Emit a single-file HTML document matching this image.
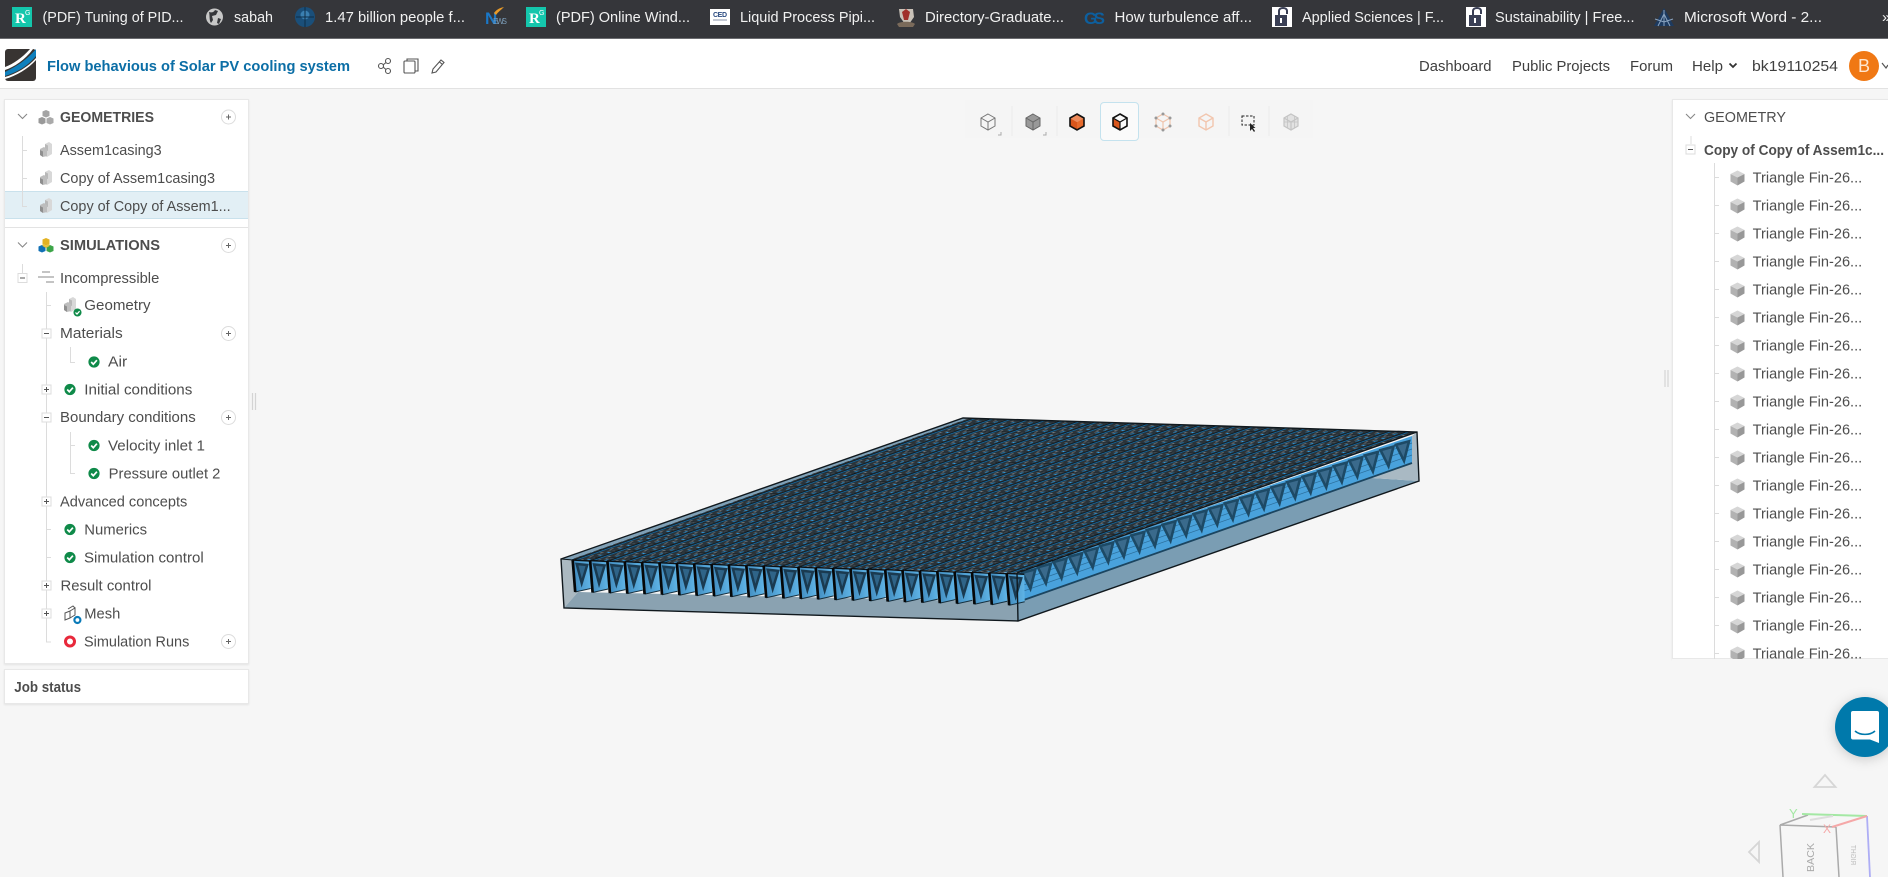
<!DOCTYPE html>
<html lang="en">
<head>
<meta charset="utf-8">
<title>Flow behavious of Solar PV cooling system</title>
<style>
html,body{margin:0;padding:0;width:1888px;height:877px;overflow:hidden;background:#f6f6f6;font-family:"Liberation Sans",sans-serif}
.abs{position:absolute}
#bar{left:0;top:0;width:1888px;height:38px;background:#35363a;border-bottom:1px solid #6b6c70}
#hdr{left:0;top:39px;width:1888px;height:50px;background:#fff;border-bottom:1px solid #e2e2e2;box-sizing:border-box}
.panel{background:#fff;border:1px solid #e8e8e8;box-shadow:0 1px 2px rgba(0,0,0,.08);box-sizing:border-box}
svg{position:absolute;left:0;top:0}
.b text{font-size:15px;fill:#f1f1f1}
.t text{font-size:14.5px;fill:#4d4d4d}
.n text{font-size:14.5px;fill:#3f3f3f}
.bd{font-weight:700}
.l{stroke:#dcdcdc;stroke-width:1;fill:none}
</style>
</head>
<body>
<div id="bar" class="abs"></div>
<div id="hdr" class="abs"></div>
<div class="abs" style="left:965px;top:100px;width:348px;height:38px;background:#f5f5f5"></div>
<div class="abs" style="left:1100px;top:102px;width:39px;height:39px;background:#fafafa;border:1px solid #c4e2ee;border-radius:4px;box-sizing:border-box"></div>
<div class="abs panel" style="left:4px;top:99px;width:245px;height:565px"></div>
<div class="abs" style="left:5px;top:191px;width:243px;height:28px;background:#e2eff5;border-top:1px solid #c9e1ec;border-bottom:1px solid #c9e1ec;box-sizing:border-box"></div>
<div class="abs" style="left:5px;top:227px;width:243px;height:1px;background:#e3e3e3"></div>
<div class="abs panel" style="left:4px;top:669px;width:245px;height:35px"></div>
<div class="abs panel" style="left:1672px;top:99px;width:230px;height:560px"></div>

<svg width="1888" height="877" viewBox="0 0 1888 877" xmlns="http://www.w3.org/2000/svg">
<defs>
<pattern id="top" width="100" height="200" patternUnits="userSpaceOnUse" patternTransform="matrix(.1736 .0053 .0995 -.03525 572.7 560)">
<rect width="100" height="200" fill="#2a3339"/>
<rect x="0" y="0" width="10" height="200" fill="#0e1315"/>
<rect x="10" y="0" width="16" height="200" fill="#165f8f"/>
<rect x="36" y="0" width="12" height="36" fill="#6f777d"/>
<rect x="36" y="100" width="12" height="30" fill="#7c8489"/>
<rect x="52" y="46" width="12" height="36" fill="#5b646a"/>
<rect x="52" y="150" width="12" height="36" fill="#687177"/>
<rect x="72" y="10" width="14" height="30" fill="#2f9fe6"/>
<rect x="72" y="64" width="14" height="30" fill="#465159"/>
<rect x="72" y="120" width="14" height="40" fill="#1f79b3"/>
<rect x="26" y="88" width="74" height="7" fill="#14191c"/>
</pattern>
<linearGradient id="finf" x1="0" x2="1" y1="0" y2="0"><stop offset="0" stop-color="#3f88bb"/><stop offset="1" stop-color="#5fb4e6"/></linearGradient>
<g id="fin">
<polygon points="0,0 17.5,1 18,28.5 2.5,32" fill="url(#finf)"/>
<polygon points="4,4 14.5,5 9,23" fill="#2f6488" stroke="#1a3a50" stroke-width="2.5"/>
<line x1="0" y1="0" x2="17.5" y2="1" stroke="#0b1115" stroke-width="1.4"/>
<line x1="2.5" y1="32" x2="18" y2="28.5" stroke="#16303f" stroke-width="1"/>
<line x1="0" y1="0" x2="2.5" y2="32" stroke="#050708" stroke-width="2.7"/>
</g>
<g id="tri"><polygon points="0,1 13,-2.5 8,17" fill="#3a6a8c" stroke="#1d4a66" stroke-width="2.6"/></g>
<g id="ck"><circle r="5.6" fill="#0f8a49"/><path d="M-2.8 0 -.7 2.2 2.9 -1.8" fill="none" stroke="#fff" stroke-width="1.7"/></g>
<g id="pl"><circle r="7" fill="#fff" stroke="#dcdcdc"/><path d="M-2.5 0H2.5M0 -2.5V2.5" stroke="#666" stroke-width="1"/></g>
<g id="mn"><rect x="-4.5" y="-4.5" width="9" height="9" fill="#fff" stroke="#dcdcdc"/><path d="M-2.5 0H2.5" stroke="#555" stroke-width="1"/></g>
<g id="ps"><rect x="-4.5" y="-4.5" width="9" height="9" fill="#fff" stroke="#dcdcdc"/><path d="M-2.5 0H2.5M0 -2.5V2.5" stroke="#555" stroke-width="1"/></g>
<g id="geo"><polygon points="-1,-6 3,-8 6,-6 6,4 1,7 -1,6" fill="#d8d8d8"/><polygon points="-1,-6 2,-4.5 2,1 -1,0" fill="#b8b8b8"/><polygon points="-6,-1 -2,-3 1,-1 1,6 -3,7 -6,5" fill="#bdbdbd"/><polygon points="-6,0 -3,1.5 -3,7 -6,5" fill="#8f8f8f"/></g>
<g id="geos"><polygon points="0,-7 3.5,-5.5 3.5,-1 0,.5 -3.5,-1 -3.5,-5.5" fill="#a4a4a4"/><polygon points="-4,0 -.5,1.5 -.5,6 -4,7.5 -7.5,6 -7.5,1.5" fill="#999"/><polygon points="4,0 7.5,1.5 7.5,6 4,7.5 .5,6 .5,1.5" fill="#aaa"/></g>
<g id="cb"><polygon points="0,-7 7,-3.5 0,0 -7,-3.5" fill="#d6d6d6"/><polygon points="-7,-3.5 0,0 0,8 -7,4" fill="#b2b2b2"/><polygon points="7,-3.5 0,0 0,8 7,4" fill="#989898"/></g>
<g id="hex"><polygon points="0,-8 7,-4 7,4 0,8 -7,4 -7,-4"/><path d="M-7 -4 0 0 7 -4M0 0V8"/></g>
</defs>

<!-- bookmarks -->
<g class="b">
<rect x="12" y="7" width="20" height="20" fill="#14c6ac"/><text x="15" y="23" style="font-size:15px;fill:#fff;font-family:'Liberation Serif',serif;font-weight:700">R</text><text x="25" y="15" style="font-size:7px;fill:#fff">G</text>
<text x="42.5" y="22" textLength="141" lengthAdjust="spacingAndGlyphs">(PDF) Tuning of PID...</text>
<circle cx="214.5" cy="17" r="8.5" fill="#c7c7c7"/><path d="M209 12c3 1 5 0 6-2l3 1-2 4-4 1 1 4-2 3c-2-3-1-7-2-11zm9 6 3 1-2 5-2-1z" fill="#35363a"/>
<text x="234" y="22" textLength="39" lengthAdjust="spacingAndGlyphs">sabah</text>
<circle cx="305" cy="17" r="10" fill="#1a4f7a"/><circle cx="305" cy="15" r="4.5" fill="#3a7fb0"/><path d="M305 7V27M296 17H314" stroke="#0e2d47" stroke-width="1"/>
<text x="325" y="22" textLength="140" lengthAdjust="spacingAndGlyphs">1.47 billion people f...</text>
<text x="485" y="24" style="font-size:17px;font-weight:700;fill:#1a78c8" textLength="8">N</text><path d="M494 13c3-4 6-5 10-6-3 3-6 5-8 8z" fill="#e89a28"/><text x="493" y="24" style="font-size:8px;fill:#7a9ab5" textLength="14">EWS</text>
<rect x="526" y="7" width="20" height="20" fill="#14c6ac"/><text x="529" y="23" style="font-size:15px;fill:#fff;font-family:'Liberation Serif',serif;font-weight:700">R</text><text x="539" y="15" style="font-size:7px;fill:#fff">G</text>
<text x="556" y="22" textLength="134" lengthAdjust="spacingAndGlyphs">(PDF) Online Wind...</text>
<rect x="710" y="9" width="20" height="16" fill="#fff"/><text x="713" y="17" style="font-size:7px;fill:#2a4a80;font-weight:700" textLength="14">CED</text><path d="M713 20H727" stroke="#8a93a8"/>
<text x="740" y="22" textLength="135" lengthAdjust="spacingAndGlyphs">Liquid Process Pipi...</text>
<path d="M899 9h14l1 8-7 10-7-10z" fill="#c9c2b8"/><path d="M902 12 906 9 910 12 908 20H904z" fill="#a02f2a"/><path d="M897 24c3-3 15-3 18 0l-2 3H899z" fill="#7a6a5a"/>
<text x="925" y="22" textLength="139" lengthAdjust="spacingAndGlyphs">Directory-Graduate...</text>
<text x="1084" y="24" style="font-size:17px;font-weight:700;fill:#0d5f9e" textLength="21">GS</text>
<text x="1114.5" y="22" textLength="137.5" lengthAdjust="spacingAndGlyphs">How turbulence aff...</text>
<rect x="1272" y="7" width="20" height="20" fill="#fff"/><rect x="1275" y="15" width="12" height="11" fill="#3a3f55"/><path d="M1279 15V11c0-4 8-4 8 0v3" fill="none" stroke="#3a3f55" stroke-width="2"/><rect x="1280" y="18" width="2" height="5" fill="#fff"/>
<text x="1302" y="22" textLength="142" lengthAdjust="spacingAndGlyphs">Applied Sciences | F...</text>
<rect x="1466" y="7" width="20" height="20" fill="#fff"/><rect x="1469" y="15" width="12" height="11" fill="#3a3f55"/><path d="M1473 15V11c0-4 8-4 8 0v3" fill="none" stroke="#3a3f55" stroke-width="2"/><rect x="1474" y="18" width="2" height="5" fill="#fff"/>
<text x="1495" y="22" textLength="139.5" lengthAdjust="spacingAndGlyphs">Sustainability | Free...</text>
<path d="M1664 8 1674 26H1654z" fill="#1d3a5f"/><path d="M1664 10V26M1658 26 1664 14 1670 26M1655 19 1664 22 1673 19" stroke="#8aa4c0" fill="none"/>
<text x="1684" y="22" textLength="138" lengthAdjust="spacingAndGlyphs">Microsoft Word - 2...</text>
<text x="1882" y="22" style="font-size:15px">»</text>
</g>

<!-- header -->
<rect x="5" y="49" width="31" height="32" rx="3" fill="#383432"/>
<path d="M5 72C13 68 25 62 36 49V56C27 67 15 73 5 76Z" fill="#0f80bd"/>
<path d="M5 67C13 64 22 58 30 49H33C25 60 14 67 5 70Z" fill="#fff"/>
<path d="M5 77C16 74 28 67 36 58V60C28 69 16 76 5 79Z" fill="#fff"/>
<text x="47" y="71" textLength="303" lengthAdjust="spacingAndGlyphs" style="font-size:15px;font-weight:700;fill:#0b6ea6">Flow behavious of Solar PV cooling system</text>
<g fill="none" stroke="#555" stroke-width="1.1">
<circle cx="381" cy="66" r="2.5"/><circle cx="388" cy="61" r="2.5"/><circle cx="388" cy="71" r="2.5"/><path d="M383 65 386 62.5M383 67 386 69.5"/>
<rect x="404" y="61" width="11" height="12" rx="1"/><path d="M407 61V59h11v12h-3"/>
<path d="M432 73 433 69 441 60 444 62.5 436 72Z M439.5 62 442.5 64.5"/>
</g>
<g class="n">
<text x="1419" y="71" textLength="72.5" lengthAdjust="spacingAndGlyphs">Dashboard</text>
<text x="1512" y="71" textLength="98" lengthAdjust="spacingAndGlyphs">Public Projects</text>
<text x="1630" y="71" textLength="43" lengthAdjust="spacingAndGlyphs">Forum</text>
<text x="1692" y="71" textLength="31" lengthAdjust="spacingAndGlyphs">Help</text>
<text x="1752" y="71" textLength="86" lengthAdjust="spacingAndGlyphs">bk19110254</text>
</g>
<path d="M1729.5 63.5 1733 67 1736.5 63.5" fill="none" stroke="#333" stroke-width="1.8"/>
<circle cx="1864" cy="66" r="15" fill="#f07814"/>
<text x="1858" y="72" style="font-size:18px;fill:#ffe6cf">B</text>
<path d="M1882 63 1886 68 1888 65" fill="none" stroke="#555" stroke-width="1.2"/>

<!-- toolbar -->
<g stroke="#ececec"><path d="M1012 106V136M1057 106V136M1229 106V136M1269 106V136"/></g>
<g transform="translate(988 122)"><use href="#hex" fill="none" stroke="#777" stroke-width="1"/></g>
<path d="M1001 132V135H998" fill="none" stroke="#aaa"/>
<g transform="translate(1033 122)"><use href="#hex" fill="#999" stroke="#666" stroke-width="1"/></g>
<path d="M1046 132V135H1043" fill="none" stroke="#aaa"/>
<g transform="translate(1077 122)"><polygon points="0,-8 7,-4 0,0 -7,-4" fill="#ee8a5a"/><polygon points="-7,-4 0,0 0,8 -7,4" fill="#d9561c"/><polygon points="7,-4 0,0 0,8 7,4" fill="#e66a2c"/><polygon points="0,-8 7,-4 7,4 0,8 -7,4 -7,-4" fill="none" stroke="#111" stroke-width="1.6"/></g>
<g transform="translate(1120 122)"><polygon points="-7,-4 0,0 0,8 -7,4" fill="#d9561c"/><polygon points="0,-8 7,-4 7,4 0,8 -7,4 -7,-4" fill="none" stroke="#111" stroke-width="1.6"/><path d="M-7 -4 0 0 7 -4M0 0V8" fill="none" stroke="#111" stroke-width="1.2"/></g>
<g transform="translate(1163 122)"><use href="#hex" fill="none" stroke="#f0c4ac" stroke-width="1.2"/><g fill="#999"><circle cx="-7" cy="-4" r="1.5"/><circle cx="7" cy="-4" r="1.5"/><circle cx="-7" cy="4" r="1.5"/><circle cx="7" cy="4" r="1.5"/><circle cy="-8" r="1.5"/><circle cy="8" r="1.5"/></g></g>
<g transform="translate(1206 122)"><use href="#hex" fill="none" stroke="#f2c6ae" stroke-width="1.4"/></g>
<rect x="1242" y="116" width="12" height="9" fill="none" stroke="#222" stroke-dasharray="2.5 1.5"/>
<path d="M1250 123V131L1252 129 1254 132 1255 131 1253 128H1255.5Z" fill="#222"/>
<g transform="translate(1291 122)"><use href="#hex" fill="#e2e2e2" stroke="#c4c4c4" stroke-width="1.2"/><path d="M-7 0 7 0M-3.5-6V6M3.5-6V6" stroke="#c4c4c4" stroke-width=".8"/></g>

<!-- geometry 3D model -->
<polygon points="561,559 574,560 578,592 564,608" fill="#abb9c1"/>
<polygon points="564,608 578,592 1018,602 1018,621" fill="#8aa2b1"/>
<polygon points="1017,573 1412,436 1412,463 1018,602" fill="#49a2dc"/>
<polygon points="1018,602 1412,463 1372,478 1419,481 1018,621" fill="#7a9db3"/>
<polygon points="1412,436 1417,432 1419,481 1372,478 1412,463" fill="#a9b9c3"/>
<polygon points="561,559 963,418 969,418.2 570,559.8" fill="#7fa0b6"/>
<polygon points="570,559.8 969,418.2 1417,432 1017,573" fill="url(#top)"/>
<g stroke="#2c6f9c" stroke-width=".7">
<line x1="1018" y1="581" x2="1412" y2="443"/><line x1="1018" y1="587" x2="1412" y2="449"/><line x1="1018" y1="593" x2="1412" y2="455"/>
</g>
<g>
<use href="#tri" x="1006.8" y="577"/><use href="#tri" x="1022.4" y="571.7"/><use href="#tri" x="1037.9" y="566.3"/><use href="#tri" x="1053.5" y="561"/><use href="#tri" x="1069.1" y="555.7"/><use href="#tri" x="1084.7" y="550.4"/><use href="#tri" x="1100.2" y="545"/><use href="#tri" x="1115.8" y="539.7"/><use href="#tri" x="1131.4" y="534.4"/><use href="#tri" x="1146.9" y="529"/><use href="#tri" x="1162.5" y="523.7"/><use href="#tri" x="1178.1" y="518.4"/><use href="#tri" x="1193.6" y="513"/><use href="#tri" x="1209.2" y="507.7"/><use href="#tri" x="1224.8" y="502.4"/><use href="#tri" x="1240.4" y="497.1"/><use href="#tri" x="1255.9" y="491.7"/><use href="#tri" x="1271.5" y="486.4"/><use href="#tri" x="1287.1" y="481.1"/><use href="#tri" x="1302.6" y="475.7"/><use href="#tri" x="1318.2" y="470.4"/><use href="#tri" x="1333.8" y="465.1"/><use href="#tri" x="1349.3" y="459.7"/><use href="#tri" x="1364.9" y="454.4"/><use href="#tri" x="1380.5" y="449.1"/><use href="#tri" x="1396" y="443.8"/>
</g>
<line x1="1018" y1="602" x2="1412" y2="463" stroke="#1b4560" stroke-width="1.8"/>
<g>
<use href="#fin" x="572.7" y="560"/><use href="#fin" x="590.1" y="560.5"/><use href="#fin" x="607.4" y="561.1"/><use href="#fin" x="624.8" y="561.6"/><use href="#fin" x="642.1" y="562.1"/><use href="#fin" x="659.5" y="562.7"/><use href="#fin" x="676.9" y="563.2"/><use href="#fin" x="694.2" y="563.7"/><use href="#fin" x="711.6" y="564.2"/><use href="#fin" x="728.9" y="564.8"/><use href="#fin" x="746.3" y="565.3"/><use href="#fin" x="763.7" y="565.8"/><use href="#fin" x="781" y="566.4"/><use href="#fin" x="798.4" y="566.9"/><use href="#fin" x="815.7" y="567.4"/><use href="#fin" x="833.1" y="568"/><use href="#fin" x="850.5" y="568.5"/><use href="#fin" x="867.8" y="569"/><use href="#fin" x="885.2" y="569.5"/><use href="#fin" x="902.5" y="570.1"/><use href="#fin" x="919.9" y="570.6"/><use href="#fin" x="937.3" y="571.1"/><use href="#fin" x="954.6" y="571.7"/><use href="#fin" x="972" y="572.2"/><use href="#fin" x="989.3" y="572.7"/><use href="#fin" x="1006.7" y="573.3"/>
</g>
<g fill="none" stroke="#10181d" stroke-width="1.4">
<path d="M561 559 963 418 1417 432 1419 481 1018 621 564 608Z"/>
<path d="M1017 573 1417 432M1017 573 1018 621"/>
</g>
<line x1="561" y1="559" x2="573" y2="560" stroke="#10181d" stroke-width="1"/>

<!-- left tree -->
<path d="M18 114 22.5 118.5 27 114" fill="none" stroke="#888" stroke-width="1.1"/>
<path d="M18 242.5 22.5 247 27 242.5" fill="none" stroke="#888" stroke-width="1.1"/>
<use href="#geos" x="46" y="117"/>
<g transform="translate(46 245)"><polygon points="0,-7 3.5,-5.5 3.5,-1 0,.5 -3.5,-1 -3.5,-5.5" fill="#e3b324"/><polygon points="-4,0 -.5,1.5 -.5,6 -4,7.5 -7.5,6 -7.5,1.5" fill="#1170b5"/><polygon points="4,0 7.5,1.5 7.5,6 4,7.5 .5,6 .5,1.5" fill="#3da548"/><polygon points="-3.5,-1 0,.5 3.5,-1 3.5,1 0,3 -3.5,1" fill="#e8c23a"/></g>
<g class="l">
<path d="M22.5 136V206.5H27M22.5 150.5H27M22.5 178.5H27"/>
<path d="M22.5 264V273"/>
<path d="M46.5 292V642H51M46.5 305.5H51M46.5 529.5H51M46.5 557.5H51"/>
<path d="M70.5 347V362.5H75M70.5 432V473.5H75M70.5 445.5H75"/>
<path d="M1691 136V144"/>
<path d="M1714.5 163V660M1714.5 177.5H1719"/>
</g>
<use href="#geo" x="46" y="150"/>
<use href="#geo" x="46" y="178"/>
<use href="#geo" x="46" y="206"/>
<use href="#mn" x="22.5" y="278"/>
<path d="M38 277H54M42 272H50M46 282H54" stroke="#888" stroke-width="1"/>
<use href="#geo" x="70" y="305"/><use href="#ck" transform="translate(77.5 312.5) scale(.72)"/>
<use href="#mn" x="46.5" y="333.5"/><use href="#ps" x="46.5" y="389.5"/><use href="#mn" x="46.5" y="417.5"/><use href="#ps" x="46.5" y="501.5"/><use href="#ps" x="46.5" y="585.5"/><use href="#ps" x="46.5" y="613.5"/>
<use href="#ck" x="94" y="362"/><use href="#ck" x="70" y="389.5"/><use href="#ck" x="94" y="445.5"/><use href="#ck" x="94" y="473.5"/><use href="#ck" x="70" y="529.5"/><use href="#ck" x="70" y="557.5"/>
<g fill="none" stroke="#555" stroke-width="1"><path d="M65 613 70 611 70 618 65 620ZM70 611 75 608 75 615 70 618M68 609 73 606 75 608"/></g>
<circle cx="77.4" cy="620" r="3" fill="#fff" stroke="#0a7ab8" stroke-width="2.2"/>
<circle cx="70" cy="641.5" r="4.5" fill="#fff" stroke="#e8293b" stroke-width="3"/>
<use href="#pl" x="228.5" y="117"/><use href="#pl" x="228.5" y="245.5"/><use href="#pl" x="228.5" y="333.5"/><use href="#pl" x="228.5" y="417.5"/><use href="#pl" x="228.5" y="641.5"/>
<g class="t">
<text x="60" y="122" class="bd" textLength="94" lengthAdjust="spacingAndGlyphs">GEOMETRIES</text>
<text x="60" y="155" textLength="101.7" lengthAdjust="spacingAndGlyphs">Assem1casing3</text>
<text x="60" y="183" textLength="155" lengthAdjust="spacingAndGlyphs">Copy of Assem1casing3</text>
<text x="60" y="211" textLength="170.7" lengthAdjust="spacingAndGlyphs">Copy of Copy of Assem1...</text>
<text x="60" y="250" class="bd" textLength="100" lengthAdjust="spacingAndGlyphs">SIMULATIONS</text>
<text x="60" y="283" textLength="99.3" lengthAdjust="spacingAndGlyphs">Incompressible</text>
<text x="84.3" y="310" textLength="66.3" lengthAdjust="spacingAndGlyphs">Geometry</text>
<text x="60" y="338" textLength="62.7" lengthAdjust="spacingAndGlyphs">Materials</text>
<text x="108" y="366.5" textLength="19.3" lengthAdjust="spacingAndGlyphs">Air</text>
<text x="84.3" y="394.5" textLength="108" lengthAdjust="spacingAndGlyphs">Initial conditions</text>
<text x="60" y="422" textLength="135.7" lengthAdjust="spacingAndGlyphs">Boundary conditions</text>
<text x="108" y="450.5" textLength="97" lengthAdjust="spacingAndGlyphs">Velocity inlet 1</text>
<text x="108.7" y="478.5" textLength="111.7" lengthAdjust="spacingAndGlyphs">Pressure outlet 2</text>
<text x="60" y="506.5" textLength="127.3" lengthAdjust="spacingAndGlyphs">Advanced concepts</text>
<text x="84.3" y="534.5" textLength="62.7" lengthAdjust="spacingAndGlyphs">Numerics</text>
<text x="84" y="562.5" textLength="119.7" lengthAdjust="spacingAndGlyphs">Simulation control</text>
<text x="60.5" y="590.5" textLength="91" lengthAdjust="spacingAndGlyphs">Result control</text>
<text x="84.3" y="618.5" textLength="36" lengthAdjust="spacingAndGlyphs">Mesh</text>
<text x="84" y="646.5" textLength="105.3" lengthAdjust="spacingAndGlyphs">Simulation Runs</text>
<text x="14.3" y="692" class="bd" textLength="66.7" lengthAdjust="spacingAndGlyphs">Job status</text>
</g>
<path d="M252.5 393V410M255.5 393V410M1665 370V387M1668 370V387" stroke="#d4d4d4" stroke-width="1.2"/>

<!-- right panel -->
<path d="M1686 114 1690.5 118.5 1695 114" fill="none" stroke="#888" stroke-width="1.1"/>
<use href="#mn" x="1690.5" y="149.5"/>
<g class="l"><path d="M1714.5 205.5H1719M1714.5 233.5H1719M1714.5 261.5H1719M1714.5 289.5H1719M1714.5 317.5H1719M1714.5 345.5H1719M1714.5 373.5H1719M1714.5 401.5H1719M1714.5 429.5H1719M1714.5 457.5H1719M1714.5 485.5H1719M1714.5 513.5H1719M1714.5 541.5H1719M1714.5 569.5H1719M1714.5 597.5H1719M1714.5 625.5H1719M1714.5 653.5H1719"/></g>
<g>
<use href="#cb" x="1737.5" y="177.5"/><use href="#cb" x="1737.5" y="205.5"/><use href="#cb" x="1737.5" y="233.5"/><use href="#cb" x="1737.5" y="261.5"/><use href="#cb" x="1737.5" y="289.5"/><use href="#cb" x="1737.5" y="317.5"/><use href="#cb" x="1737.5" y="345.5"/><use href="#cb" x="1737.5" y="373.5"/><use href="#cb" x="1737.5" y="401.5"/><use href="#cb" x="1737.5" y="429.5"/><use href="#cb" x="1737.5" y="457.5"/><use href="#cb" x="1737.5" y="485.5"/><use href="#cb" x="1737.5" y="513.5"/><use href="#cb" x="1737.5" y="541.5"/><use href="#cb" x="1737.5" y="569.5"/><use href="#cb" x="1737.5" y="597.5"/><use href="#cb" x="1737.5" y="625.5"/><use href="#cb" x="1737.5" y="653.5"/>
</g>
<g class="t">
<text x="1704" y="122" textLength="82" lengthAdjust="spacingAndGlyphs" style="font-size:15px">GEOMETRY</text>
<text x="1704" y="155" class="bd" textLength="180" lengthAdjust="spacingAndGlyphs">Copy of Copy of Assem1c...</text>
<text x="1752.7" y="182.5" textLength="109.5" lengthAdjust="spacingAndGlyphs">Triangle Fin-26...</text>
<text x="1752.7" y="210.5" textLength="109.5" lengthAdjust="spacingAndGlyphs">Triangle Fin-26...</text>
<text x="1752.7" y="238.5" textLength="109.5" lengthAdjust="spacingAndGlyphs">Triangle Fin-26...</text>
<text x="1752.7" y="266.5" textLength="109.5" lengthAdjust="spacingAndGlyphs">Triangle Fin-26...</text>
<text x="1752.7" y="294.5" textLength="109.5" lengthAdjust="spacingAndGlyphs">Triangle Fin-26...</text>
<text x="1752.7" y="322.5" textLength="109.5" lengthAdjust="spacingAndGlyphs">Triangle Fin-26...</text>
<text x="1752.7" y="350.5" textLength="109.5" lengthAdjust="spacingAndGlyphs">Triangle Fin-26...</text>
<text x="1752.7" y="378.5" textLength="109.5" lengthAdjust="spacingAndGlyphs">Triangle Fin-26...</text>
<text x="1752.7" y="406.5" textLength="109.5" lengthAdjust="spacingAndGlyphs">Triangle Fin-26...</text>
<text x="1752.7" y="434.5" textLength="109.5" lengthAdjust="spacingAndGlyphs">Triangle Fin-26...</text>
<text x="1752.7" y="462.5" textLength="109.5" lengthAdjust="spacingAndGlyphs">Triangle Fin-26...</text>
<text x="1752.7" y="490.5" textLength="109.5" lengthAdjust="spacingAndGlyphs">Triangle Fin-26...</text>
<text x="1752.7" y="518.5" textLength="109.5" lengthAdjust="spacingAndGlyphs">Triangle Fin-26...</text>
<text x="1752.7" y="546.5" textLength="109.5" lengthAdjust="spacingAndGlyphs">Triangle Fin-26...</text>
<text x="1752.7" y="574.5" textLength="109.5" lengthAdjust="spacingAndGlyphs">Triangle Fin-26...</text>
<text x="1752.7" y="602.5" textLength="109.5" lengthAdjust="spacingAndGlyphs">Triangle Fin-26...</text>
<text x="1752.7" y="630.5" textLength="109.5" lengthAdjust="spacingAndGlyphs">Triangle Fin-26...</text>
<text x="1752.7" y="658.5" textLength="109.5" lengthAdjust="spacingAndGlyphs">Triangle Fin-26...</text>
</g>
<rect x="1672" y="659" width="216" height="12" fill="#f6f6f6"/>

<!-- chat -->
<circle cx="1865" cy="727" r="30" fill="#0079ab" style="filter:drop-shadow(0 2px 6px rgba(0,0,0,.18))"/>
<path d="M1853 711H1877A2 2 0 0 1 1879 713V743L1870 739.5H1853A2 2 0 0 1 1851 737.5V713A2 2 0 0 1 1853 711Z" fill="#fff"/>
<path d="M1855 731C1860 735.5 1870 735.5 1875 731" fill="none" stroke="#0079ab" stroke-width="1.6"/>

<!-- view cube -->
<path d="M1825 775 1814.5 787H1835.5Z M1759 842 1749 852 1759 862Z" fill="none" stroke="#d6d6d6" stroke-width="1.8"/>
<path d="M1780 825 1783 877M1836 827 1839 877M1780 825 1836 827M1780 825 1808 815" fill="none" stroke="#aaa" stroke-width="1.5"/>
<path d="M1867 816 1870 877" stroke="#aeaef5" stroke-width="1.8"/>
<path d="M1802 814 1867 816" stroke="#a4e8a4" stroke-width="2"/>
<path d="M1867 816 1832 827" stroke="#f5a8a8" stroke-width="2"/>
<path d="M1810 820 1833 816" stroke="#ddd" stroke-width="2"/>
<text x="1789" y="818" style="font-size:13px;fill:#a4e8a4">Y</text>
<text x="1823" y="833" style="font-size:12px;fill:#f5a8a8">X</text>
<text transform="translate(1814 872) rotate(-90)" style="font-size:10.5px;fill:#aaa" textLength="29" lengthAdjust="spacingAndGlyphs">BACK</text>
<text transform="translate(1851 845) rotate(90) scale(-1 1) translate(-20 0)" style="font-size:7px;fill:#bbb" textLength="20" lengthAdjust="spacingAndGlyphs">RIGHT</text>
</svg>
</body>
</html>
